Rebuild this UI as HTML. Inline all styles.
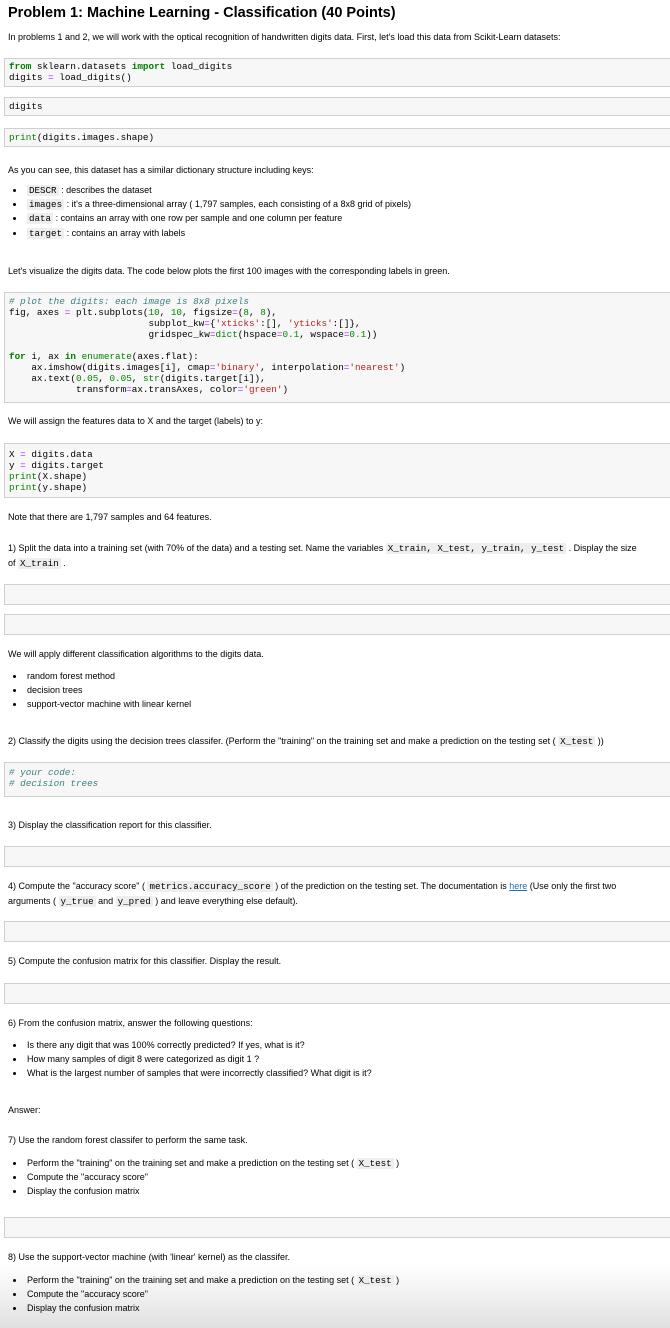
<!DOCTYPE html>
<html><head><meta charset="utf-8"><style>
body{margin:0;width:670px;height:1328px;position:relative;overflow:hidden;background:#fff;font-family:"Liberation Sans",Arial,sans-serif;font-size:9px;color:#000}
.bg{position:absolute;left:0;top:1265px;width:670px;height:63px;background:linear-gradient(#fff,#e0e0e0)}
.t{position:absolute;left:8px;line-height:12px;white-space:nowrap}
.b{position:absolute;left:27px;line-height:12px;white-space:nowrap}
.b:before{content:"";position:absolute;left:-14px;top:5px;width:3px;height:3px;border-radius:50%;background:#000}
.c{position:absolute;left:4px;width:680px;background:#f7f7f7;border:1px solid #cfcfcf;box-sizing:border-box}
.c pre{margin:0;position:absolute;left:4px;font-family:"Liberation Mono",monospace;font-size:9.3px;line-height:11px;color:#000}
code{font-family:"Liberation Mono",monospace;font-size:9.2px;background:#eee;padding:0 2px;border-radius:1px}
.k{color:#008000;font-weight:bold}.g{color:#008000}.s{color:#ba2121}.m{color:#aa22ff}.n{color:#080}.cm{color:#408080;font-style:italic}
h1{position:absolute;left:8px;top:4px;margin:0;font-size:14.5px;font-weight:bold;line-height:18px;white-space:nowrap}
a{color:#296eaa;text-decoration:underline}
</style></head><body>
<div class="bg"></div>
<h1>Problem 1: Machine Learning - Classification (40 Points)</h1>
<div class="t" style="top:31px">In problems 1 and 2, we will work with the optical recognition of handwritten digits data. First, let's load this data from Scikit-Learn datasets:</div>

<div class="c" style="top:58px;height:29px"><pre style="top:2px"><span class="k">from</span> sklearn.datasets <span class="k">import</span> load_digits
digits <span class="m">=</span> load_digits()</pre></div>
<div class="c" style="top:97px;height:19px"><pre style="top:3px">digits</pre></div>
<div class="c" style="top:128px;height:19px"><pre style="top:3px"><span class="g">print</span>(digits.images.shape)</pre></div>

<div class="t" style="top:164px">As you can see, this dataset has a similar dictionary structure including keys:</div>
<div class="b" style="top:184px"><code>DESCR</code> : describes the dataset</div>
<div class="b" style="top:198px"><code>images</code> : it's a three-dimensional array ( 1,797 samples, each consisting of a 8x8 grid of pixels)</div>
<div class="b" style="top:212px"><code>data</code> : contains an array with one row per sample and one column per feature</div>
<div class="b" style="top:227px"><code>target</code> : contains an array with labels</div>

<div class="t" style="top:265px">Let's visualize the digits data. The code below plots the first 100 images with the corresponding labels in green.</div>
<div class="c" style="top:292px;height:111px"><pre style="top:3px"><span class="cm"># plot the digits: each image is 8x8 pixels</span>
fig, axes <span class="m">=</span> plt.subplots(<span class="n">10</span>, <span class="n">10</span>, figsize<span class="m">=</span>(<span class="n">8</span>, <span class="n">8</span>),
                         subplot_kw<span class="m">=</span>{<span class="s">'xticks'</span>:[], <span class="s">'yticks'</span>:[]},
                         gridspec_kw<span class="m">=</span><span class="g">dict</span>(hspace<span class="m">=</span><span class="n">0.1</span>, wspace<span class="m">=</span><span class="n">0.1</span>))

<span class="k">for</span> i, ax <span class="k">in</span> <span class="g">enumerate</span>(axes.flat):
    ax.imshow(digits.images[i], cmap<span class="m">=</span><span class="s">'binary'</span>, interpolation<span class="m">=</span><span class="s">'nearest'</span>)
    ax.text(<span class="n">0.05</span>, <span class="n">0.05</span>, <span class="g">str</span>(digits.target[i]),
            transform<span class="m">=</span>ax.transAxes, color<span class="m">=</span><span class="s">'green'</span>)</pre></div>

<div class="t" style="top:415px">We will assign the features data to X and the target (labels) to y:</div>
<div class="c" style="top:443px;height:55px"><pre style="top:5px">X <span class="m">=</span> digits.data
y <span class="m">=</span> digits.target
<span class="g">print</span>(X.shape)
<span class="g">print</span>(y.shape)</pre></div>

<div class="t" style="top:511px">Note that there are 1,797 samples and 64 features.</div>
<div class="t" style="top:542px">1) Split the data into a training set (with 70% of the data) and a testing set. Name the variables <code>X_train, X_test, y_train, y_test</code> . Display the size</div>
<div class="t" style="top:557px">of <code>X_train</code> .</div>
<div class="c" style="top:584px;height:21px"></div>
<div class="c" style="top:614px;height:21px"></div>

<div class="t" style="top:648px">We will apply different classification algorithms to the digits data.</div>
<div class="b" style="top:670px">random forest method</div>
<div class="b" style="top:684px">decision trees</div>
<div class="b" style="top:698px">support-vector machine with linear kernel</div>

<div class="t" style="top:735px">2) Classify the digits using the decision trees classifer. (Perform the "training" on the training set and make a prediction on the testing set ( <code>X_test</code> ))</div>
<div class="c" style="top:762px;height:35px"><pre style="top:4px"><span class="cm"># your code:
# decision trees</span></pre></div>

<div class="t" style="top:819px">3) Display the classification report for this classifier.</div>
<div class="c" style="top:846px;height:21px"></div>

<div class="t" style="top:880px">4) Compute the "accuracy score" ( <code>metrics.accuracy_score</code> ) of the prediction on the testing set. The documentation is <a>here</a> (Use only the first two</div>
<div class="t" style="top:895px">arguments ( <code>y_true</code> and <code>y_pred</code> ) and leave everything else default).</div>
<div class="c" style="top:921px;height:21px"></div>

<div class="t" style="top:955px">5) Compute the confusion matrix for this classifier. Display the result.</div>
<div class="c" style="top:983px;height:21px"></div>

<div class="t" style="top:1017px">6) From the confusion matrix, answer the following questions:</div>
<div class="b" style="top:1039px">Is there any digit that was 100% correctly predicted? If yes, what is it?</div>
<div class="b" style="top:1053px">How many samples of digit 8 were categorized as digit 1 ?</div>
<div class="b" style="top:1067px">What is the largest number of samples that were incorrectly classified? What digit is it?</div>

<div class="t" style="top:1104px">Answer:</div>
<div class="t" style="top:1134px">7) Use the random forest classifer to perform the same task.</div>
<div class="b" style="top:1157px">Perform the "training" on the training set and make a prediction on the testing set ( <code>X_test</code> )</div>
<div class="b" style="top:1171px">Compute the "accuracy score"</div>
<div class="b" style="top:1185px">Display the confusion matrix</div>
<div class="c" style="top:1217px;height:21px"></div>

<div class="t" style="top:1251px">8) Use the support-vector machine (with 'linear' kernel) as the classifer.</div>
<div class="b" style="top:1274px">Perform the "training" on the training set and make a prediction on the testing set ( <code>X_test</code> )</div>
<div class="b" style="top:1288px">Compute the "accuracy score"</div>
<div class="b" style="top:1302px">Display the confusion matrix</div>
</body></html>
